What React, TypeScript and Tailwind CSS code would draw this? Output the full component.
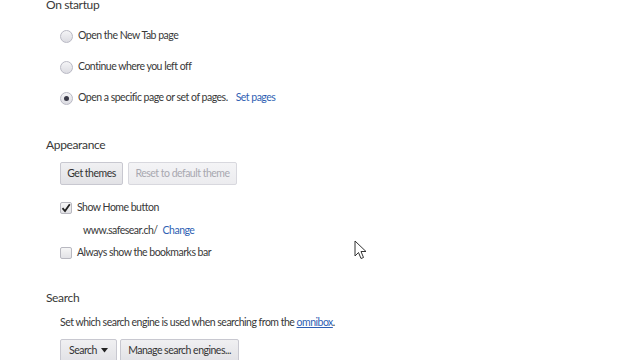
import React from "react";

function Radio({ checked }: { checked?: boolean }) {
  return (
    <span className="w-[13px] h-[13px] rounded-full border border-[#b9b9c4] bg-gradient-to-b from-[#f4f4f6] to-[#dcdce2] flex items-center justify-center shrink-0">
      {checked && <span className="w-[5px] h-[5px] rounded-full bg-[#3a3a48]" />}
    </span>
  );
}

function Checkbox({ checked }: { checked?: boolean }) {
  return (
    <span className="w-[12px] h-[12px] rounded-[2px] border border-[#b8b8c0] bg-gradient-to-b from-[#f6f6f6] to-[#e2e2e6] flex items-center justify-center shrink-0">
      {checked && (
        <svg width="10" height="10" viewBox="0 0 10 10">
          <path d="M1.5 5.2 L4 8 L8.8 1.2" stroke="#222" strokeWidth="1.8" fill="none" />
        </svg>
      )}
    </span>
  );
}

function Btn({ children, disabled, className = "" }: { children: React.ReactNode; disabled?: boolean; className?: string }) {
  return (
    <div
      className={
        "h-[23px] flex items-center rounded-[2px] border bg-gradient-to-b " +
        (disabled ? "text-[#a8a8b0] border-[#d8d8de] from-[#f4f4f6] to-[#ececef] " : "text-[#333] border-[#c8c8d0] from-[#f0f0f2] to-[#e2e2e6] ") +
        className
      }
    >
      {children}
    </div>
  );
}

const body = "text-[10.5px] tracking-[-0.5px]";
const head = "text-[12px] tracking-[-0.35px] leading-[20px]";

export default function App() {
  return (
    <div
      className="w-[640px] h-[360px] bg-white overflow-hidden relative text-[#383838]"
      style={{ fontFamily: "Lato, 'Noto Sans', sans-serif" }}
    >
      <div className="pl-[46px] mt-[-5px]">
        <div className={head}>On startup</div>
        <div className={"pl-[14px] mt-[13px] flex flex-col gap-[15px] " + body}>
          <div className="flex items-center gap-[5px] h-[16px]">
            <Radio />
            <span>Open the New Tab page</span>
          </div>
          <div className="flex items-center gap-[5px] h-[16px]">
            <Radio />
            <span>Continue where you left off</span>
          </div>
          <div className="flex items-center gap-[5px] h-[16px]">
            <Radio checked />
            <span>Open a specific page or set of pages.</span>
            <span className="text-[#2f5fb3] ml-[3px]">Set pages</span>
          </div>
        </div>

        <div className={head + " mt-[29px]"}>Appearance</div>
        <div className={"pl-[14px] " + body}>
          <div className="flex gap-[5px] mt-[7px]">
            <Btn className="w-[63px] justify-center">Get themes</Btn>
            <Btn disabled className="w-[109px] justify-center">Reset to default theme</Btn>
          </div>
          <div className="flex items-center gap-[5px] h-[16px] mt-[15px]">
            <Checkbox checked />
            <span>Show Home button</span>
          </div>
          <div className="flex items-center h-[16px] mt-[7px] pl-[23px]">
            <span>www.safesear.ch/</span>
            <span className="text-[#2f5fb3] ml-[5px]">Change</span>
          </div>
          <div className="flex items-center gap-[5px] h-[16px] mt-[6px]">
            <Checkbox />
            <span>Always show the bookmarks bar</span>
          </div>
        </div>

        <div className={head + " mt-[27px]"}>Search</div>
        <div className={"pl-[14px] " + body}>
          <div className="h-[16px] flex items-center mt-[7px]">
            <span>
              Set which search engine is used when searching from the{" "}
              <span className="text-[#2f5fb3] underline">omnibox</span>.
            </span>
          </div>
          <div className="flex gap-[3px] mt-[8px]">
            <Btn className="w-[57px] pl-[8px] pr-[8px] justify-between">
              <span>Search</span>
              <svg width="7" height="5" viewBox="0 0 7 5">
                <path d="M0 0 L7 0 L3.5 4.5 Z" fill="#222" />
              </svg>
            </Btn>
            <Btn className="w-[119px] justify-center">Manage search engines...</Btn>
          </div>
        </div>
      </div>

      <svg className="absolute left-[354px] top-[240px]" width="14" height="21" viewBox="0 0 14 21">
        <path
          d="M1 1 L1 16 L4.5 12.5 L7 18.5 L9.5 17.5 L7 11.5 L12 11.5 Z"
          fill="#fff"
          stroke="#333"
          strokeWidth="1"
          strokeLinejoin="round"
        />
      </svg>
    </div>
  );
}
